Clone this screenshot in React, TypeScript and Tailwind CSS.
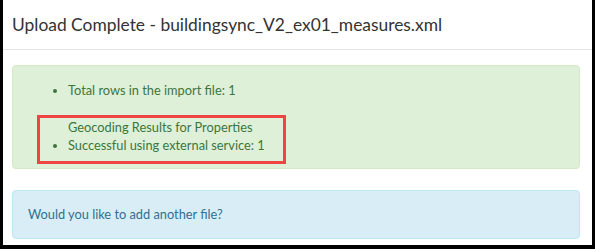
export default function App() {
  return (
    <div className="w-[595px] h-[249px] bg-white border-l-[3px] border-r-[3px] border-b-[4px] border-black overflow-hidden font-['Lato',Arial,sans-serif]">
      {/* Header */}
      <div className="h-[50px] border-b border-[#e5e5e5] pl-[9px] flex items-center">
        <h4 className="text-[17.4px] leading-[26px] text-[#333]">
          Upload Complete - buildingsync_V2_ex01_measures.xml
        </h4>
      </div>

      {/* Body */}
      <div className="pl-[9px] pr-[12px] pt-[15px]">
        <div className="relative bg-[#dff0d8] border border-[#d6e9c6] rounded text-[#3c763d] text-[12.8px] leading-[18px] px-[15px] pt-[15px] pb-[14px]">
          <ul className="list-disc pl-[40px] mb-[19px]">
            <li>Total rows in the import file: 1</li>
          </ul>
          <ul className="list-disc pl-[40px]">
            <div>Geocoding Results for Properties</div>
            <li>Successful using external service: 1</li>
          </ul>
          <div className="absolute left-[24px] top-[49px] w-[249px] h-[49px] border-[3px] border-[#ef4444]" />
        </div>

        <div className="mt-[21px] bg-[#d9edf7] border border-[#bce8f1] rounded text-[#31708f] text-[12.8px] leading-[17px] px-[15px] py-[15px]">
          Would you like to add another file?
        </div>
      </div>
    </div>
  );
}
